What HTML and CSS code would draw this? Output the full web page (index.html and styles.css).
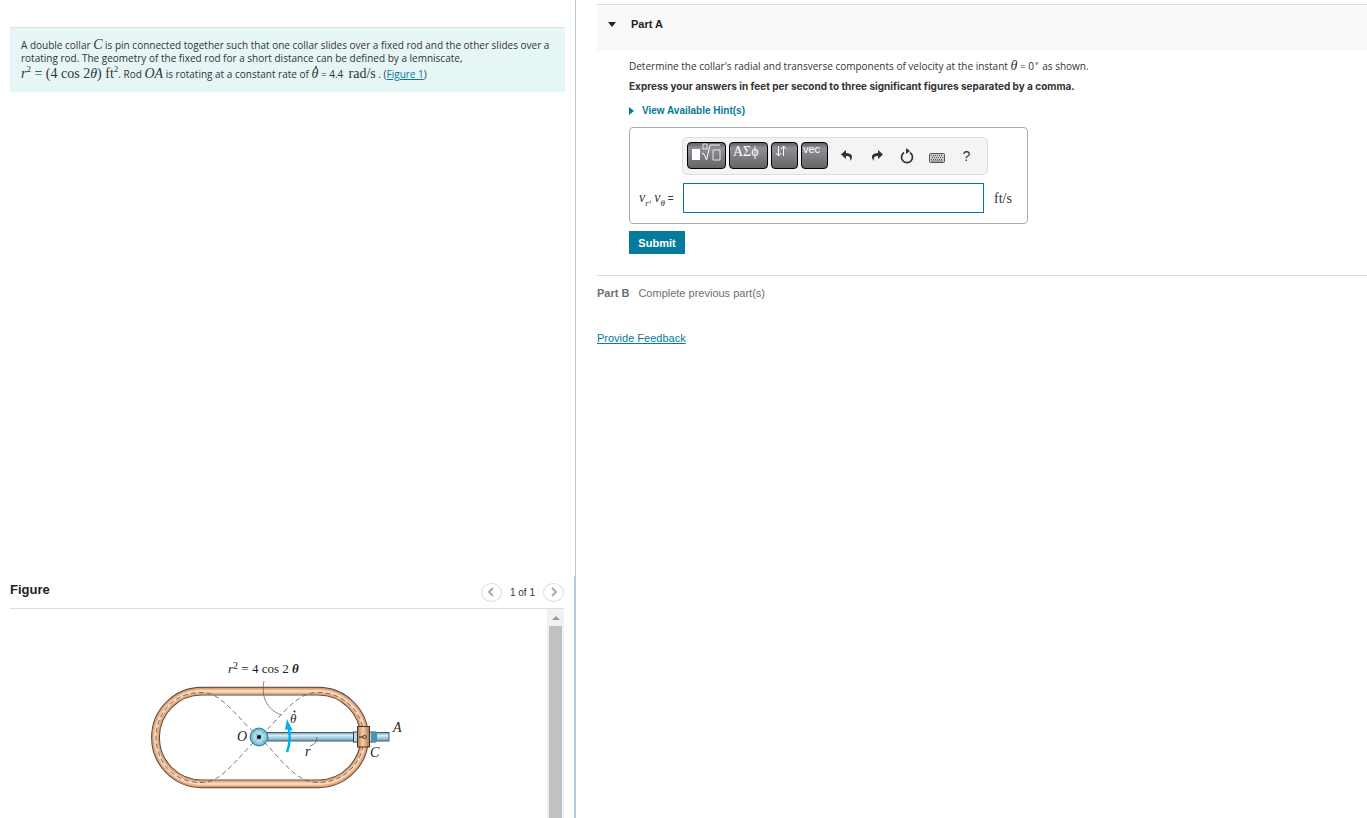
FILE: index.html
```html
<!DOCTYPE html>
<html lang="en">
<head>
<meta charset="utf-8">
<title>Part A</title>
<link rel="stylesheet" href="styles.css">
</head>
<body>
<div class="page">
  <div class="left">
    <section class="intro">
      <p>A double collar <i class="math">C</i> is pin connected together such that one collar slides over a fixed rod and the other slides over a rotating rod. The geometry of the fixed rod for a short distance can be defined by a lemniscate,</p>
      <p class="formula"><span class="math"><i>r</i><sup>2</sup> = (4 cos 2<i>θ</i>) ft<sup>2</sup></span>. Rod <i class="math">OA</i> is rotating at a constant rate of <i class="math dotted">θ</i> = 4.4 &nbsp;<span class="math">rad/s</span> . (<a href="#figure">Figure 1</a>)</p>
    </section>
    <section class="figure" id="figure">
      <header class="figure-head">
        <h2>Figure</h2>
        <nav class="pager">
          <button type="button" aria-label="Previous figure"><svg width="10" height="12" viewBox="0 0 10 12"><path d="M7 2 3 6l4 4"/></svg></button>
          <span>1 of 1</span>
          <button type="button" aria-label="Next figure"><svg width="10" height="12" viewBox="0 0 10 12"><path d="m3 2 4 4-4 4"/></svg></button>
        </nav>
      </header>
      <div class="figure-body">
        <div class="drawing">
          <svg width="260" height="150" viewBox="149 650 260 150" role="img" aria-label="Double collar on a lemniscate rod">
            <defs>
              <linearGradient id="rod" x1="0" y1="0" x2="0" y2="1"><stop offset="0" stop-color="#6d9fb5"/><stop offset=".35" stop-color="#d8edf6"/><stop offset=".6" stop-color="#a9d1e2"/><stop offset="1" stop-color="#6ba4bd"/></linearGradient>
              <linearGradient id="collar" x1="0" x2="1"><stop offset="0" stop-color="#b87a50"/><stop offset=".45" stop-color="#f8d0ab"/><stop offset="1" stop-color="#b0724a"/></linearGradient>
              <radialGradient id="hub"><stop offset="0" stop-color="#6fb3cf"/><stop offset=".45" stop-color="#b9e1ef"/><stop offset=".8" stop-color="#84c2d9"/><stop offset="1" stop-color="#3f93b0"/></radialGradient>
            </defs>
            <g fill="none">
              <rect x="155.500" y="691.200" width="209" height="92.600" rx="46.300" stroke="#55443a" stroke-width="8.800"/>
              <rect x="155.500" y="691.200" width="209" height="92.600" rx="46.300" stroke="#d99a6c" stroke-width="7"/>
              <rect x="155.500" y="691.200" width="209" height="92.600" rx="46.300" stroke="#e9b48c" stroke-width="5"/>
              <rect x="155.500" y="691.200" width="209" height="92.600" rx="46.300" stroke="#f8d9be" stroke-width="2.500"/>
              <path d="M259 737C241 722 224 696 207 693C177 689 156 711 156 737.500S177 786 207 782C224 779 241 754 259 737C277 722 293 696 312 693C341 689 364 711 364 737.500S341 786 312 782C293 779 277 754 259 737" stroke="#555" stroke-width=".8" stroke-dasharray="5 3"/>
              <path d="M264 681C261 696 266 709 281 715" stroke="#555" stroke-width=".7"/>
            </g>
            <rect x="266" y="732.500" width="123" height="8.500" fill="url(#rod)" stroke="#34505d" stroke-width=".9"/>
            <rect x="353.500" y="732" width="22" height="10" fill="#b9dcea" stroke="#2c4551"/>
            <rect x="371" y="732" width="6" height="10" fill="#4694b1"/>
            <rect x="357.500" y="726.500" width="12" height="20.500" fill="url(#collar)" stroke="#4c3020"/>
            <path d="M359 737h4" stroke="#222"/><circle cx="364.500" cy="737" r="1.700" fill="none" stroke="#222" stroke-width=".8"/>
            <circle cx="259" cy="737" r="9" fill="url(#hub)" stroke="#2b7793" stroke-width=".8"/>
            <path d="m252 744 14-14m-14 0 14 14" stroke="#41798d" stroke-width=".6" stroke-dasharray="3 2"/>
            <circle cx="259" cy="737" r="2" fill="#111"/>
            <path d="M287 752Q291.500 740 288.500 727" fill="none" stroke="#00aeef" stroke-width="2.500"/>
            <path d="m287 719-2 11 3-1 5 2z" fill="#00aeef"/>
            <path d="M317 737Q317 744 310 746" fill="none" stroke="#555" stroke-width=".7"/>
            <g class="labels">
              <text x="228" y="673"><tspan class="it">r</tspan><tspan class="small" dy="-4">2</tspan><tspan dy="4"> = 4 cos 2 </tspan><tspan class="it theta">θ</tspan></text>
              <text x="237" y="741" class="it large">O</text>
              <text x="290" y="723" class="it">θ</text><circle cx="294.500" cy="711.500" r="1"/>
              <text x="305" y="756" class="it large">r</text>
              <text x="370" y="757" class="it large">C</text>
              <text x="393" y="732" class="it large">A</text>
            </g>
          </svg>
        </div>
        <div class="scrollbar" aria-hidden="true"><span class="arrow"></span><span class="thumb"></span></div>
      </div>
    </section>
  </div>

  <main class="right">
    <header class="part-head"><span class="caret"></span><h2>Part A</h2></header>
    <section class="part">
      <p>Determine the collar's radial and transverse components of velocity at the instant <i class="math">θ</i> = 0<sup class="degree">∘</sup> as shown.</p>
      <p class="strong">Express your answers in feet per second to three significant figures separated by a comma.</p>
      <a class="hints" href="#hints"><span class="hint-arrow"></span>View Available Hint(s)</a>
      <form class="answer-form">
        <div class="answer">
          <div class="toolbar">
            <button type="button" class="tool wide" aria-label="Templates"><svg width="34" height="22" viewBox="0 0 34 22"><path d="M4 6h8v11H4z" fill="#fff"/><path d="M14 10l2 1 2.500 6L22 2h10" fill="none" stroke="#fff" stroke-width="1"/><path d="M15 1h4v5h-4zM25 7h7v10h-7z" fill="none" stroke="#fff" stroke-width=".8"/></svg></button>
            <button type="button" class="tool wide symbols">ΑΣϕ</button>
            <button type="button" class="tool" aria-label="Arrows"><svg width="22" height="22" viewBox="0 0 22 22"><path d="M6.500 3v10M4 10l2.500 3L9 10M11.500 13V3M9 6l2.500-3L14 6" fill="none" stroke="#fff"/></svg></button>
            <button type="button" class="tool vec">vec</button>
            <button type="button" class="icon first" aria-label="Undo"><svg width="14" height="14" viewBox="0 0 14 14"><path d="M6 1 1 5.500 6 10V7c3 0 5 1 4 5 4-4 2-8-4-8z" fill="#333"/></svg></button>
            <button type="button" class="icon" aria-label="Redo"><svg width="14" height="14" viewBox="0 0 14 14"><path d="m8 1 5 4.500L8 10V7c-3 0-5 1-4 5-4-4-2-8 4-8z" fill="#333"/></svg></button>
            <button type="button" class="icon" aria-label="Reset"><svg width="14" height="16" viewBox="0 0 14 16"><path d="M4 4.500a5.500 5.500 0 1 0 6 0" fill="none" stroke="#333" stroke-width="1.700"/><path d="M6 0v6l4-3z" fill="#333"/></svg></button>
            <button type="button" class="icon" aria-label="Keyboard shortcuts"><svg width="16" height="16" viewBox="0 0 16 16"><rect x=".5" y="5.500" width="15" height="9" rx="1" fill="#ccc" stroke="#555"/><path d="M2 7.500h12M3 9.500h11M2 11.500h12" stroke="#555" stroke-dasharray="1 1"/><path d="M2 13h12" stroke="#777"/></svg></button>
            <button type="button" class="icon help" aria-label="Help">?</button>
          </div>
          <label for="velocity"><i class="math">v<sub>r</sub></i>, <i class="math">v<sub>θ</sub></i> =</label>
          <input id="velocity" type="text">
          <span class="math units">ft/s</span>
        </div>
        <button type="submit" class="submit">Submit</button>
      </form>
    </section>
    <section class="next"><h2>Part B</h2><span>Complete previous part(s)</span></section>
    <a class="feedback" href="#feedback">Provide Feedback</a>
  </main>
</div>
</body>
</html>
```
FILE: styles.css
```css
* { box-sizing: border-box; }
body { margin: 0; background: #fff; color: #333; font: 10px/13px "Liberation Sans", Arial, sans-serif; }
p, h2 { margin: 0; }
button { font-family: inherit; padding: 0; }
a { color: #047a9c; }
.intro, .part > p { font-family: "Open Sans", "Liberation Sans", sans-serif; }
.math { font-family: "Liberation Serif", "Times New Roman", serif; font-size: 14px; line-height: 13px; }
sup, sub { font-size: 9px; line-height: 0; }
.dotted { position: relative; }
.dotted::before { content: ""; position: absolute; top: 0; left: 4px; width: 2px; height: 2px; border-radius: 50%; background: #333; }
.degree { font-family: "DejaVu Sans", sans-serif; }
.page { display: grid; grid-template-columns: 576px 1fr; min-height: 100vh; }
.left { display: flex; flex-direction: column; justify-content: space-between; border-right: 1px solid #b9c8d6; padding: 27px 0 0 10px; }
.intro { margin-right: 10px; background: #e6f6f6; border-top: 1px solid #d3e2e2; padding: 10px 11px 8px; }
.formula { line-height: 19px; }
.figure { padding-right: 10px; border-right: 1px solid #b9cde0; }
.figure-head { display: flex; align-items: center; justify-content: space-between; height: 33px; border-bottom: 1px solid #ddd; }
.figure-head h2 { padding-bottom: 5px; font-size: 13px; font-weight: 700; color: #222; }
.pager { display: flex; align-items: center; gap: 8px; }
.pager button { display: grid; place-items: center; width: 21px; height: 19px; border: 1px solid #ddd; border-radius: 50%; background: #fff; }
.pager path { fill: none; stroke: #aaa; stroke-width: 2; }
.figure-body { display: flex; height: 209px; }
.drawing { flex: 1; padding-top: 41px; text-align: center; }
.labels { font-family: "Liberation Serif", serif; font-size: 13px; fill: #222; }
.labels .it { font-style: italic; }
.labels .large { font-size: 14px; }
.labels .small { font-size: 10px; }
.labels .theta { font-weight: 700; }
.scrollbar { display: flex; flex-direction: column; align-items: center; width: 17px; background: #f1f1f1; }
.arrow { margin: 7px 0 6px; border: 4px solid transparent; border-top: 0; border-bottom-color: #999; }
.thumb { flex: 1; width: 13px; background: #c1c1c1; }
.right { padding: 4px 0 0 21px; }
.part-head { display: flex; gap: 15px; height: 47px; padding: 13px 11px 0; background: #f9f9f9; border-top: 1px solid #ddd; }
.part-head h2 { font-size: 11px; color: #222; }
.caret { margin-top: 4px; height: 5px; border: 4px solid transparent; border-top: 5px solid #222; border-bottom: 0; }
.part { padding: 8px 32px 21px; border-bottom: 1px solid #ddd; }
.part > .strong { margin-top: 7px; font-family: Inter, "Liberation Sans", sans-serif; font-weight: 700; }
.hints { display: flex; align-items: center; gap: 8px; margin-top: 11px; font-weight: 700; text-decoration: none; }
.hint-arrow { border: 4px solid transparent; border-left: 5px solid #047a9c; border-right: 0; }
.answer { display: grid; grid-template-columns: 44px 301px auto; row-gap: 8px; align-items: center; width: 399px; margin: 10px 0 7px; padding: 9px 9px 10px; border: 1px solid #aaa; border-radius: 4px; }
.toolbar { grid-column: 2 / 4; justify-self: start; display: flex; align-items: center; gap: 3px; margin-left: -1px; height: 38px; width: 306px; padding: 0 4px 1px; border: 1px solid #ddd; border-radius: 5px; background: #f4f4f4; }
.tool { display: flex; align-items: flex-start; justify-content: flex-start; flex: none; width: 27px; height: 27px; border: 1px solid #000; border-radius: 4px; background: linear-gradient(#606064, #8f8f95 20%, #656568); color: #fff; }
.wide { width: 39px; }
.symbols { padding-left: 3px; font: 14px/18px "Liberation Serif", serif; }
.vec { padding-left: 1px; font-size: 11px; line-height: 13px; }
.icon { display: grid; place-items: center; width: 27px; height: 27px; border: 0; background: none; color: #333; }
.first { margin-left: 2px; }
.help { font-size: 14px; }
.answer input { width: 100%; height: 30px; border: 1px solid #047a9c; background: #fff; }
.units { margin-left: 10px; }
.submit { display: block; width: 56px; height: 23px; border: 0; background: #047a9c; color: #fff; font-size: 11px; font-weight: 700; }
.next { display: flex; gap: 9px; padding: 11px 0 32px; font-size: 11px; color: #6a7070; }
.next h2 { font-size: 11px; }
.feedback { font-size: 11px; }
```
